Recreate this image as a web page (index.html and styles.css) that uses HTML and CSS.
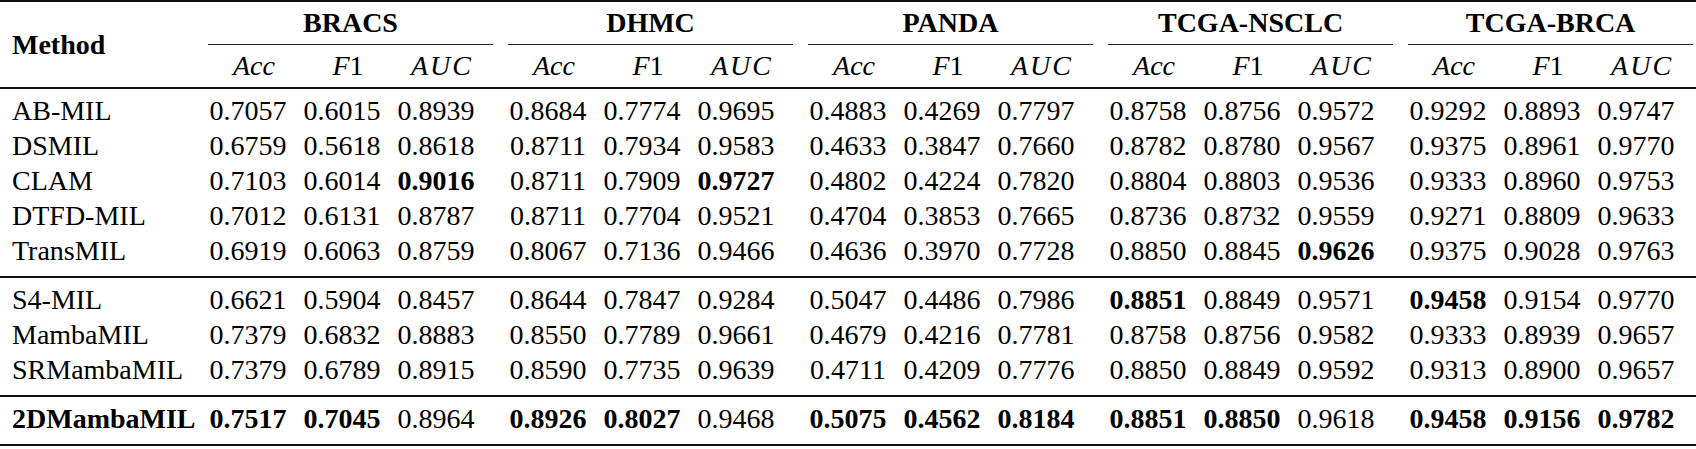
FILE: index.html
```html
<!DOCTYPE html>
<html lang="en">
<head>
    <meta charset="UTF-8">
    <title>MIL Results</title>
    <link rel="stylesheet" href="styles.css">
</head>
<body>
    <table class="results">
        <colgroup>
            <col class="c-method">
            <col class="c-val"><col class="c-val"><col class="c-val"><col class="c-gap">
            <col class="c-val"><col class="c-val"><col class="c-val"><col class="c-gap">
            <col class="c-val"><col class="c-val"><col class="c-val"><col class="c-gap">
            <col class="c-val"><col class="c-val"><col class="c-val"><col class="c-gap">
            <col class="c-val"><col class="c-val"><col class="c-val"><col class="c-end">
        </colgroup>
        <thead>
            <tr class="head-top">
                <th rowspan="2" class="method">Method</th>
                <th colspan="3" class="group"><div class="cmid">BRACS</div></th><th></th>
                <th colspan="3" class="group"><div class="cmid">DHMC</div></th><th></th>
                <th colspan="3" class="group"><div class="cmid">PANDA</div></th><th></th>
                <th colspan="3" class="group"><div class="cmid">TCGA-NSCLC</div></th><th></th>
                <th colspan="3" class="group"><div class="cmid">TCGA-BRCA</div></th><th></th>
            </tr>
            <tr class="head-sub">
                <th><i>Acc</i></th><th><i>F</i>1</th><th><i class="wide">AUC</i></th><th></th>
                <th><i>Acc</i></th><th><i>F</i>1</th><th><i class="wide">AUC</i></th><th></th>
                <th><i>Acc</i></th><th><i>F</i>1</th><th><i class="wide">AUC</i></th><th></th>
                <th><i>Acc</i></th><th><i>F</i>1</th><th><i class="wide">AUC</i></th><th></th>
                <th><i>Acc</i></th><th><i>F</i>1</th><th><i class="wide">AUC</i></th><th></th>
            </tr>
        </thead>
        <tbody>
            <tr class="first">
                <td class="name">AB-MIL</td>
                <td>0.7057</td><td>0.6015</td><td>0.8939</td><td></td>
                <td>0.8684</td><td>0.7774</td><td>0.9695</td><td></td>
                <td>0.4883</td><td>0.4269</td><td>0.7797</td><td></td>
                <td>0.8758</td><td>0.8756</td><td>0.9572</td><td></td>
                <td>0.9292</td><td>0.8893</td><td>0.9747</td><td></td>
            </tr>
            <tr>
                <td class="name">DSMIL</td>
                <td>0.6759</td><td>0.5618</td><td>0.8618</td><td></td>
                <td>0.8711</td><td>0.7934</td><td>0.9583</td><td></td>
                <td>0.4633</td><td>0.3847</td><td>0.7660</td><td></td>
                <td>0.8782</td><td>0.8780</td><td>0.9567</td><td></td>
                <td>0.9375</td><td>0.8961</td><td>0.9770</td><td></td>
            </tr>
            <tr>
                <td class="name">CLAM</td>
                <td>0.7103</td><td>0.6014</td><td class="b">0.9016</td><td></td>
                <td>0.8711</td><td>0.7909</td><td class="b">0.9727</td><td></td>
                <td>0.4802</td><td>0.4224</td><td>0.7820</td><td></td>
                <td>0.8804</td><td>0.8803</td><td>0.9536</td><td></td>
                <td>0.9333</td><td>0.8960</td><td>0.9753</td><td></td>
            </tr>
            <tr>
                <td class="name">DTFD-MIL</td>
                <td>0.7012</td><td>0.6131</td><td>0.8787</td><td></td>
                <td>0.8711</td><td>0.7704</td><td>0.9521</td><td></td>
                <td>0.4704</td><td>0.3853</td><td>0.7665</td><td></td>
                <td>0.8736</td><td>0.8732</td><td>0.9559</td><td></td>
                <td>0.9271</td><td>0.8809</td><td>0.9633</td><td></td>
            </tr>
            <tr class="last">
                <td class="name">TransMIL</td>
                <td>0.6919</td><td>0.6063</td><td>0.8759</td><td></td>
                <td>0.8067</td><td>0.7136</td><td>0.9466</td><td></td>
                <td>0.4636</td><td>0.3970</td><td>0.7728</td><td></td>
                <td>0.8850</td><td>0.8845</td><td class="b">0.9626</td><td></td>
                <td>0.9375</td><td>0.9028</td><td>0.9763</td><td></td>
            </tr>
        </tbody>
        <tbody>
            <tr class="first">
                <td class="name">S4-MIL</td>
                <td>0.6621</td><td>0.5904</td><td>0.8457</td><td></td>
                <td>0.8644</td><td>0.7847</td><td>0.9284</td><td></td>
                <td>0.5047</td><td>0.4486</td><td>0.7986</td><td></td>
                <td class="b">0.8851</td><td>0.8849</td><td>0.9571</td><td></td>
                <td class="b">0.9458</td><td>0.9154</td><td>0.9770</td><td></td>
            </tr>
            <tr>
                <td class="name">MambaMIL</td>
                <td>0.7379</td><td>0.6832</td><td>0.8883</td><td></td>
                <td>0.8550</td><td>0.7789</td><td>0.9661</td><td></td>
                <td>0.4679</td><td>0.4216</td><td>0.7781</td><td></td>
                <td>0.8758</td><td>0.8756</td><td>0.9582</td><td></td>
                <td>0.9333</td><td>0.8939</td><td>0.9657</td><td></td>
            </tr>
            <tr class="last">
                <td class="name">SRMambaMIL</td>
                <td>0.7379</td><td>0.6789</td><td>0.8915</td><td></td>
                <td>0.8590</td><td>0.7735</td><td>0.9639</td><td></td>
                <td>0.4711</td><td>0.4209</td><td>0.7776</td><td></td>
                <td>0.8850</td><td>0.8849</td><td>0.9592</td><td></td>
                <td>0.9313</td><td>0.8900</td><td>0.9657</td><td></td>
            </tr>
        </tbody>
        <tbody>
            <tr class="first last">
                <td class="name b">2DMambaMIL</td>
                <td class="b">0.7517</td><td class="b">0.7045</td><td>0.8964</td><td></td>
                <td class="b">0.8926</td><td class="b">0.8027</td><td>0.9468</td><td></td>
                <td class="b">0.5075</td><td class="b">0.4562</td><td class="b">0.8184</td><td></td>
                <td class="b">0.8851</td><td class="b">0.8850</td><td>0.9618</td><td></td>
                <td class="b">0.9458</td><td class="b">0.9156</td><td class="b">0.9782</td><td></td>
            </tr>
        </tbody>
    </table>
</body>
</html>
```

FILE: styles.css
```css
body {
    margin: 0;
    background: #fff;
    color: #000;
    font-family: "Liberation Serif", Tinos, "Times New Roman", Times, "Nimbus Roman", "Nimbus Roman No9 L", FreeSerif, "Noto Serif", "DejaVu Serif", Georgia, serif;
    font-size: 28px;
}
.results {
    width: 1696px;
    border-collapse: collapse;
    table-layout: fixed;
    border-top: 2px solid #111;
    border-bottom: 2px solid #111;
}
.c-method { width: 201px; }
.c-val { width: 94px; }
.c-gap { width: 18px; }
.c-end { width: 13px; }

th, td {
    padding: 0;
    text-align: center;
    white-space: nowrap;
    font-family: inherit;
}
thead {
    border-bottom: 2px solid #111;
}
.head-top th {
    height: 43px;
    font-weight: bold;
    vertical-align: bottom;
}
.cmid {
    margin: 0 -10px 0 7px;
    padding-bottom: 6px;
    border-bottom: 1.5px solid #222;
    line-height: 30px;
}
.head-sub th {
    height: 42px;
    font-weight: normal;
}
.head-sub i {
    font-style: italic;
    padding-left: 12px;
}
.head-sub i.wide {
    letter-spacing: 2px;
}
th.method {
    text-align: left;
    padding-left: 12px;
    vertical-align: middle;
    font-weight: bold;
}

td {
    height: 35px;
    line-height: 35px;
}
td.name {
    text-align: left;
    padding-left: 12px;
}
tr.first td {
    padding-top: 4px;
}
tr.last td {
    padding-bottom: 8px;
}
tbody + tbody {
    border-top: 2px solid #111;
}
.b {
    font-weight: bold;
}
```
